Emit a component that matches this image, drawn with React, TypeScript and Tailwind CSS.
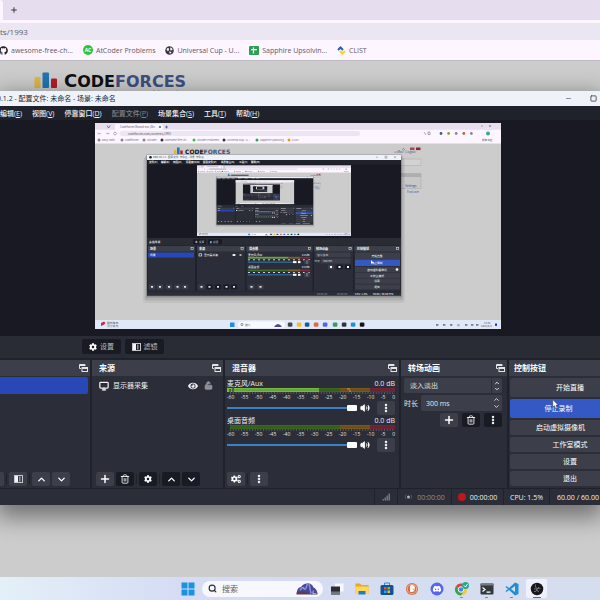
import React from "react";
import { ChevronDown, ChevronUp, EllipsisVertical, LockOpen, Minus, Monitor, Plus, Search, Square, Trash2, Volume2 } from "lucide-react";
import { FaCog, FaCogs, FaDiscord, FaEye, FaGithub } from "react-icons/fa";

/* ---------- captured desktop shown in the preview ---------- */

const previewMenus = ["文件(F)", "编辑(E)", "视图(V)", "停靠窗口(D)", "配置文件(P)", "场景集合(S)", "工具(T)", "帮助(H)"];
const previewMenuX = [54, 66, 78, 91, 108, 126, 144, 156];
const previewBookmarks: [number, string, string][] = [
  [3, "#8a8794", "Daily Math"],
  [26, "#8a8794", "Codeforces"],
  [48, "#8a8794", "AtCoder"],
  [66, "#333333", "awesome-free-ch..."],
  [98, "#2fc43b", "AtCoder Problems"],
  [128, "#333333", "Universal Cup - U..."],
  [161, "#2ea35a", "Sapphire Upsolving..."],
  [193, "#d9a320", "CLIST"],
];
const previewTaskIcons: [number, string][] = [
  [195, "#43464d"], [204, "#f1bd35"], [212, "#1c5c94"], [221, "#dd6b42"], [230, "#5661e8"],
  [240, "#3b9c55"], [249, "#30343b"], [258, "#2492d1"], [267, "#15161a"],
];

function Dock({ x, w, children }: { x: number; w: number; children?: React.ReactNode }) {
  return (
    <g>
      <rect x={x} y={123} width={w} height={45} fill="#2b2e38" />
      <rect x={x} y={123} width={w} height={5.5} fill="#3c3f49" />
      <rect x={x + w - 4} y={124.5} width={2.2} height={2} fill="none" stroke="#d8d9dd" strokeWidth={0.6} />
      {children}
    </g>
  );
}

function Label({ x, y, size, fill, bold, detail, w, children }: { x: number; y: number; size: number; fill: string; bold?: boolean; detail: boolean; w: number; children: string }) {
  if (!detail) {
    return <rect x={x} y={y - size * 0.7} width={w} height={size * 0.6} fill={fill} opacity={0.6} />;
  }
  return (
    <text x={x} y={y} fontSize={size} fill={fill} fontWeight={bold ? 700 : 400}>
      {children}
    </text>
  );
}

function Desktop({ depth }: { depth: number }) {
  const detail = depth === 0;
  return (
    <g>
      <rect width={406} height={206} fill="#cccccc" />
      <rect width={406} height={6.5} fill="#e6deee" />
      <rect x={20} y={1} width={48} height={6} rx={1.5} fill="#fdf5ff" />
      <rect y={6.5} width={406} height={14} fill="#fdf5ff" />
      <rect x={25} y={8} width={240} height={5} rx={2.5} fill="#ebe6f1" />
      <path d="M12 2.5l1.6 2.5 1.6-2.5M64 3l2 2M66 3l-2 2M70 4h3M71.500 2.500v3" stroke="#35577a" strokeWidth={0.7} fill="none" />
      <Label detail={detail} x={25} y={5} size={2.8} w={32} fill="#5d5965">Codeforces Round 963 (Div.</Label>
      <path d="M6 10.500h-3l1-1m-1 1l1 1M11 10.500h3l-1-1m1 1l-1 1" stroke="#8b8792" strokeWidth={0.5} fill="none" />
      <circle cx={20} cy={10.500} r={1.4} stroke="#77737e" strokeWidth={0.5} fill="none" />
      <Label detail={detail} x={33} y={11.6} size={3} w={44} fill="#5d5965">codeforces.com/contests/1993</Label>
      {["#345c9c", "#8c9a4b", "#8a8794", "#c3603a", "#8a8794"].map((c, i) => (
        <circle key={i} cx={346 + i * 7.6} cy={10.5} r={1.4} fill={c} />
      ))}
      <circle cx={393} cy={10.5} r={2} fill="#3ba784" />
      <path d="M329 9l2 3M333 9h2v2.500h-2zM386 3h2M394 2l2 2m0-2l-2 2" stroke="#77737e" strokeWidth={0.6} fill="none" />
      {previewBookmarks.map(([x, c, t]) => (
        <g key={x}>
          <circle cx={x + 1} cy={17} r={1.5} fill={c} />
          <Label detail={detail} x={x + 4} y={18} size={2.6} w={14} fill="#6d6975">{t}</Label>
        </g>
      ))}
      <Label detail={detail} x={387} y={18} size={2.6} w={12} fill="#5d5965">所有书签</Label>

      <rect x={79} y={27} width={2.4} height={4.5} fill="#e2b53c" />
      <rect x={82} y={24.5} width={2.6} height={7} fill="#2377b8" />
      <rect x={85.3} y={27.5} width={2.4} height={4} fill="#b41f27" />
      {detail ? (
        <text x={90} y={31} fontSize={6} fontFamily="DejaVu Sans" fontWeight={700} fill="#111">
          CODE<tspan fill="#44517f">FORCES</tspan>
        </text>
      ) : (
        <rect x={90} y={27} width={46} height={3} fill="#333b52" />
      )}
      <rect x={315} y={24.5} width={4.5} height={2.6} fill="#a8474c" />
      <rect x={321} y={24.5} width={4.5} height={2.6} fill="#8e2333" />
      <path d="M307 27l1.500-2 1.500 2" stroke="#777" strokeWidth={0.6} fill="none" />
      <Label detail={detail} x={299} y={30.3} size={2.8} w={28} fill="#4b5580">1.4BoxT | Logout</Label>
      <rect x={296} y={36} width={30} height={6.500} fill="#d2d2d2" stroke="#a9a9a9" strokeWidth={0.5} />
      <rect x={296} y={50.5} width={30} height={15} fill="#c8c8c8" stroke="#a4a4a4" strokeWidth={0.5} />
      <rect x={296} y={50.5} width={30} height={3.5} fill="#aeaeae" />
      <Label detail={detail} x={310} y={64} size={3} w={11} fill="#31489a">Settings</Label>
      <Label detail={detail} x={312} y={69.5} size={2.8} w={13} fill="#4058a8">Find user</Label>

      {/* recorder window */}
      <rect x={48} y={35} width={262} height={145} rx={3} fill="#000" opacity={0.05} />
      <rect x={49.500} y={33} width={259} height={144.500} rx={2} fill="#000" opacity={0.09} />
      <rect x={51} y={31.5} width={256} height={143} fill="#000" opacity={0.18} />
      <rect x={52} y={31.5} width={254} height={141} fill="#20222b" />
      <rect x={52} y={31.5} width={254} height={5.5} fill="#eff3f9" />
      <circle cx={55.5} cy={34.200} r={1.3} fill="#222" />
      <Label detail={detail} x={58} y={35.4} size={2.6} w={50} fill="#4e535c">OBS 30.1.2 - 配置文件: 未命名 - 场景: 未命名</Label>
      <path d="M281 34.200h2M290 33.200h2v2h-2zM299 33.200l2 2m0-2l-2 2" stroke="#777" strokeWidth={0.5} fill="none" />
      {previewMenus.map((t, i) => (
        <Label key={t} detail={detail} x={previewMenuX[i]} y={40} size={2.5} w={8} bold fill="#ffffff">{t}</Label>
      ))}
      <rect x={52} y={41.5} width={254} height={73.500} fill="#181923" />
      {depth < 4 ? (
        <g transform="translate(102 42.5) scale(0.3793 0.3417)">
          <Desktop depth={depth + 1} />
        </g>
      ) : null}
      <rect x={52} y={115} width={254} height={7.500} fill="#292c35" />
      <Label detail={detail} x={54} y={120} size={2.8} w={11} bold fill="#dddde0">未选择源</Label>
      <rect x={98} y={116.3} width={13} height={5} rx={0.8} fill="#181a24" />
      <rect x={113} y={116.3} width={14} height={5} rx={0.8} fill="#181a24" />
      <Label detail={detail} x={100} y={120} size={2.8} w={9} fill="#d0d1d6">✱ 设置</Label>
      <Label detail={detail} x={115} y={120} size={2.8} w={9} fill="#d0d1d6">▮ 滤镜</Label>

      <Dock x={53} w={47}>
        <Label detail={detail} x={55} y={127} size={3} w={6} bold fill="#fff">场景</Label>
        <rect x={53} y={129.5} width={46} height={5} fill="#2848b8" />
        <Label detail={detail} x={55} y={133} size={2.8} w={5} fill="#fff">场景</Label>
      </Dock>
      <Dock x={102} w={48}>
        <Label detail={detail} x={104} y={127} size={3} w={6} bold fill="#fff">来源</Label>
        <rect x={104} y={130.8} width={2.8} height={2.2} fill="none" stroke="#fff" strokeWidth={0.6} />
        <Label detail={detail} x={109} y={133.200} size={2.8} w={14} fill="#fff">显示器采集</Label>
        <ellipse cx={139} cy={132} rx={1.700} ry={1} fill="#fff" />
        <rect x={144.500} y={131} width={2} height={2} fill="#aaa" />
      </Dock>
      <Dock x={151.5} w={66}>
        <Label detail={detail} x={154} y={127} size={3} w={9} bold fill="#fff">混音器</Label>
        {[0, 12.7].map((o, i) => (
          <g key={o} transform={`translate(0 ${o})`}>
            <Label detail={detail} x={153} y={132.500} size={2.8} w={10} fill="#fff">{i ? "桌面音频" : "麦克风/Aux"}</Label>
            <Label detail={detail} x={207} y={132.500} size={2.6} w={7} fill="#fff">0.0 dB</Label>
            <rect x={153} y={133.8} width={40} height={1.8} fill={i ? "#3f6b2a" : "#65a83b"} />
            <rect x={193} y={133.8} width={12} height={1.8} fill="#80602a" />
            <rect x={205} y={133.8} width={10} height={1.8} fill="#84293c" />
            <path d="M153 136.800h62" stroke="#cdd0d6" strokeWidth={1} strokeDasharray="2 3" />
            <rect x={153} y={138.700} width={46} height={0.9} fill="#3a7fc4" />
            <rect x={198} y={138.100} width={3.500} height={2} fill="#fff" />
            <rect x={203} y={138.100} width={2.500} height={2} fill="#fff" />
            <rect x={209} y={136.800} width={6} height={4.500} rx={0.600} fill="#3c3f49" />
            <path d="M212 137.600v3" stroke="#fff" strokeWidth={0.7} strokeDasharray="0.700 0.400" />
          </g>
        ))}
      </Dock>
      <Dock x={219} w={39}>
        <Label detail={detail} x={221} y={127} size={3} w={13} bold fill="#fff">转场动画</Label>
        <rect x={220.500} y={129.5} width={35} height={4.800} rx={0.6} fill="#3c3f49" />
        <Label detail={detail} x={222} y={133} size={2.8} w={11} fill="#ddd">淡入淡出</Label>
        <rect x={226} y={135.500} width={29.500} height={5} rx={0.6} fill="#3c3f49" />
        <Label detail={detail} x={219.500} y={139.200} size={2.8} w={5} fill="#ddd">时长</Label>
        <Label detail={detail} x={228} y={139.200} size={2.8} w={9} fill="#ddd">300 ms</Label>
        {[233, 241.500, 250].map((x, i) => (
          <g key={x}>
            <rect x={x} y={141.700} width={6} height={4.600} rx={0.6} fill={i ? "#181a24" : "#3c3f49"} />
            <rect x={x + 2} y={143} width={2} height={2} fill="#fff" />
          </g>
        ))}
      </Dock>
      <Dock x={259.5} w={46}>
        <Label detail={detail} x={262} y={127} size={3} w={13} bold fill="#fff">控制按钮</Label>
        {["开始直播", "停止录制", "启动虚拟摄像机", "工作室模式", "设置", "退出"].map((t, i) => {
          const y = [129.5, 136.5, 144, 149.8, 155.600, 161.4][i];
          const h = i < 2 ? 6.5 : 5.2;
          return (
            <g key={t}>
              <rect x={260} y={y} width={45} height={h} rx={0.6} fill={i === 1 ? "#3459c4" : "#3c3f49"} />
              <Label detail={detail} x={282 - t.length * 1.4} y={y + h / 2 + 1.100} size={2.8} w={t.length * 2.8} fill="#fff">{t}</Label>
            </g>
          );
        })}
        <circle cx={302} cy={146.500} r={1.300} fill="#fff" />
        <path d="M276 137l0 4 1-1 1.500 0z" fill="#fff" />
      </Dock>
      {[54, 62, 71, 79.500, 87, 103.500, 111.500, 120, 128.500, 136, 153.500, 162.500].map((x, i) => (
        <g key={x}>
          <rect x={x} y={161.500} width={6} height={4.700} rx={0.6} fill={i > 5 && i < 10 ? "#181a24" : "#3c3f49"} />
          <rect x={x + 2} y={163} width={2} height={1.700} fill="#e4e5e8" />
        </g>
      ))}
      <rect x={52} y={168.500} width={254} height={4} fill="#2b2e38" />
      <Label detail={detail} x={222} y={171.600} size={2.6} w={12} fill="#90939b">00:00:00</Label>
      <Label detail={detail} x={242} y={171.600} size={2.6} w={12} fill="#90939b">00:00:00</Label>
      <Label detail={detail} x={260} y={171.600} size={2.6} w={13} fill="#fff">CPU: 1.5%</Label>
      <Label detail={detail} x={278} y={171.600} size={2.6} w={20} fill="#fff">60.00 / 60.00 FPS</Label>

      {/* taskbar */}
      <rect y={197} width={406} height={9} fill="#e1e8f7" />
      <path d="M6 200l3-1.500 1.500 1.500-2 2-2.500 1z" fill="#d0293d" />
      <Label detail={detail} x={12} y={200.700} size={2.8} w={17} fill="#555">明日降雨</Label>
      <Label detail={detail} x={12} y={204} size={2.8} w={17} fill="#777">预计有雨</Label>
      <rect x={135} y={199.500} width={4.500} height={4.500} fill="#1f8fdc" />
      <rect x={143} y={198.400} width={47} height={6.600} rx={3.300} fill="#f8faff" />
      <circle cx={147} cy={201.500} r={1.100} stroke="#333" strokeWidth={0.5} fill="none" />
      <Label detail={detail} x={150} y={202.800} size={2.8} w={6} fill="#555">搜索</Label>
      <path d="M179 204q4-6 8 0z" fill="#4c4a8c" />
      {previewTaskIcons.map(([x, c]) => (
        <rect key={x} x={x - 2.200} y={199.500} width={4.600} height={4.200} rx={1.200} fill={c} />
      ))}
      {[341, 348, 355, 370, 376, 381].map((x) => (
        <rect key={x} x={x} y={201} width={2.400} height={1.800} fill="#7b808c" />
      ))}
      <Label detail={detail} x={362} y={202.800} size={2.8} w={4} fill="#555">英</Label>
      <Label detail={detail} x={389} y={200.700} size={2.6} w={8} fill="#555">22:35</Label>
      <Label detail={detail} x={386} y={203.900} size={2.6} w={11} fill="#555">2024/8/4</Label>
      <rect x={400} y={200.500} width={2} height={2.400} fill="#2b39c4" />
    </g>
  );
}

/* ---------- small shared parts ---------- */

function PopOut() {
  return (
    <svg viewBox="0 0 18 16" className="h-2 w-[9px]" fill="none" stroke="#e3e4e8" strokeWidth="2">
      <path d="M4 9H1V1h11v3M1 3h11" />
      <rect x="6" y="7" width="11" height="8" fill="#3c3f49" />
      <path d="M6 9h11" />
    </svg>
  );
}

function Filters() {
  return (
    <svg viewBox="0 0 18 16" className="h-2 w-[9px]">
      <rect x="1" y="1" width="16" height="14" fill="none" stroke="#c3c5cb" strokeWidth="2" />
      <rect x="2" y="2" width="6" height="12" fill="#f4f4f6" />
      <rect x="10" y="3" width="3" height="10" fill="#8f929a" />
    </svg>
  );
}

function DockTitle({ children }: { children?: string }) {
  return (
    <h2 className="flex h-4 items-center justify-between bg-[#3c3f49] pr-[2px] pl-[7px] text-[8px] leading-none font-bold text-white">
      <span>{children}</span>
      <PopOut />
    </h2>
  );
}

function Tool({ label, dark, children }: { label: string; dark?: boolean; children: React.ReactNode }) {
  return (
    <button
      aria-label={label}
      className={`flex h-[14px] w-[18px] shrink-0 items-center justify-center rounded-[2px] text-white ${dark ? "bg-[#181a24]" : "bg-[#3c3f49]"}`}
    >
      {children}
    </button>
  );
}

const Sep = () => <span className="h-[10px] w-px shrink-0 bg-[#20222b]" />;

function Channel({ name, live }: { name: string; live?: boolean }) {
  const marks = ["-60", "-55", "-50", "-45", "-40", "-35", "-30", "-25", "-20", "-15", "-10", "-5", "0"];
  return (
    <div className="flex h-[37px] flex-col">
      <div className="flex h-[10px] items-center justify-between text-[7px] leading-none text-[#ececef]">
        <span>{name}</span>
        <span>0.0 dB</span>
      </div>
      <svg viewBox="0 0 168 6" preserveAspectRatio="none" className="h-[6px] w-full shrink-0">
        <rect x="3" y="0" width="110" height="4" fill="#3c671f" />
        <rect x="113" y="0" width="30" height="4" fill="#7a571c" />
        <rect x="143" y="0" width="25" height="4" fill="#742338" />
        {live ? <rect x="0" y="0" width="92" height="4" fill="#74ba40" /> : null}
        {live ? <path d="M3 1v3M6 0v4" stroke="#1c2a18" strokeWidth="1" /> : null}
        {live ? <path d="M120 1h3M122 3h2" stroke="#d8a631" strokeWidth="1" /> : null}
        <path d="M3 2h165" stroke="#22301e" strokeWidth="0.5" opacity="0.6" />
        <path d="M3 5h165" stroke="#7f838c" strokeWidth="1" strokeDasharray="1 1.750" />
      </svg>
      <div className="flex h-[6px] items-center justify-between text-[5px] leading-none text-[#e0e1e5]">
        {marks.map((m) => (
          <span key={m}>{m}</span>
        ))}
      </div>
      <div className="flex h-[15px] items-center">
        <input
          type="range"
          aria-label={name}
          defaultValue={100}
          className="h-2 min-w-0 flex-1 appearance-none bg-transparent [&::-webkit-slider-runnable-track]:h-[2px] [&::-webkit-slider-runnable-track]:bg-[#3a82c8] [&::-webkit-slider-thumb]:-mt-[2px] [&::-webkit-slider-thumb]:h-[6px] [&::-webkit-slider-thumb]:w-[10px] [&::-webkit-slider-thumb]:appearance-none [&::-webkit-slider-thumb]:rounded-[1px] [&::-webkit-slider-thumb]:bg-white"
        />
        <Volume2 className="mr-[7px] ml-[3px] size-[10px] shrink-0 fill-white text-white" strokeWidth={2} />
        <Tool label="更多">
          <EllipsisVertical className="size-[10px]" strokeWidth={4} />
        </Tool>
      </div>
    </div>
  );
}

const menus: [string, string][] = [["编辑", "E"], ["视图", "V"], ["停靠窗口", "D"], ["配置文件", "P"], ["场景集合", "S"], ["工具", "T"], ["帮助", "H"]];

function Control({ children, tone }: { children: string; tone?: "tall" | "active" | "narrow" }) {
  const style =
    tone === "active"
      ? "h-[19px] w-[97px] bg-[#3459c4]"
      : tone === "tall"
        ? "h-[19px] w-full bg-[#3c3f49]"
        : tone === "narrow"
          ? "h-[15px] w-[101px] bg-[#3c3f49]"
          : "h-[15px] w-full bg-[#3c3f49]";
  return <button className={`flex items-center justify-center rounded-[2px] text-[7px] leading-none text-white ${style}`}>{children}</button>;
}

function TaskButton({ label, children, active, running }: { label: string; children: React.ReactNode; active?: boolean; running?: boolean }) {
  return (
    <button aria-label={label} className={`flex h-[19px] w-[21px] flex-col items-center justify-end rounded-[2px] ${active ? "bg-[#eef1fb]" : ""}`}>
      <svg viewBox="0 0 28 28" className="size-[14px]">
        {children}
      </svg>
      <span className={`mt-px h-px rounded-full ${active ? "w-2 bg-[#5a56c8]" : running ? "w-[3px] bg-[#7f8491]" : "w-[3px]"}`} />
    </button>
  );
}

export default function App() {
  return (
    <div className="flex min-h-screen flex-col overflow-hidden bg-[#cccccc] font-['Open_Sans','Noto_Sans_CJK_SC',sans-serif] text-[7px]">
      {/* browser chrome */}
      <header className="bg-[#fdf5ff] text-[#5f5a68]">
        <div className="flex h-5 items-center bg-[#e6deee]">
          <span className="h-full w-[3px] rounded-tr-[3px] bg-[#fdf5ff]" />
          <button aria-label="新标签页" className="ml-[7px]">
            <Plus className="size-2 text-[#3d3946]" strokeWidth={3} />
          </button>
        </div>
        <div className="pt-[3px]">
          <input aria-label="地址" defaultValue="ts/1993" className="block h-[17px] w-full bg-[#ebe6f1] text-[8px] leading-none outline-none" />
        </div>
        <nav className="flex h-5 items-center gap-[10px] text-[7px] leading-none whitespace-nowrap">
          <a href="#free" className="-ml-px flex items-center gap-[3px]">
            <FaGithub className="size-[9px] text-[#24222a]" />
            awesome-free-ch...
          </a>
          <a href="#atcoder" className="flex items-center gap-[3px]">
            <span className="flex size-[10px] items-center justify-center rounded-full bg-[#2cc63b] text-[5px] font-bold text-white">AC</span>
            AtCoder Problems
          </a>
          <a href="#ucup" className="flex items-center gap-[3px]">
            <svg viewBox="0 0 18 18" className="size-[9px]">
              <circle cx="9" cy="9" r="8.500" fill="#3a3840" />
              <path d="M3 6q4-4 5 0t-3 4zM10 3q5 0 5 5l-4 1zM8 11l5 1-3 4z" fill="#fdf5ff" />
            </svg>
            Universal Cup - U...
          </a>
          <a href="#sapphire" className="flex items-center gap-[3px]">
            <svg viewBox="0 0 20 18" className="h-[9px] w-[10px]">
              <rect width="20" height="18" rx="2" fill="#2aa050" />
              <path d="M4 7h12M9 3v12" stroke="#fff" strokeWidth="2.500" />
            </svg>
            Sapphire Upsolvin...
          </a>
          <a href="#clist" className="flex items-center gap-[3px]">
            <svg viewBox="0 0 18 18" className="size-[9px]" fill="none" strokeWidth="4">
              <path d="M2 8l5-5 5 5" stroke="#2760b4" />
              <path d="M6 10l5 5 5-5" stroke="#f2d52a" />
            </svg>
            CLIST
          </a>
        </nav>
      </header>

      {/* site header, partly covered by the recorder */}
      <div className="flex h-[31px] items-start overflow-hidden border-t border-[#bdb9bf] pt-[11px] pl-[34px]">
        <svg viewBox="0 0 46 34" className="h-[17px] w-[23px]">
          <rect x="1" y="10" width="12" height="22" rx="2" fill="#dfb64b" />
          <rect x="17" y="1" width="13" height="31" rx="2" fill="#2274b4" />
          <rect x="34" y="13" width="12" height="19" rx="2" fill="#b01e28" />
        </svg>
        <div className="ml-[7px] flex flex-col items-end font-['DejaVu_Sans',sans-serif] font-bold">
          <h1 className="text-[16px] leading-[18px] text-[#101014]">
            <span className="text-[18px] leading-none">C</span>ODE<span className="text-[#414f82]">FORCES</span>
          </h1>
          <p className="text-[7px] leading-none text-[#2b2e3c]">Sponsored by TON</p>
        </div>
      </div>

      {/* recorder window */}
      <main className="relative z-10 bg-[#20222b] shadow-[0_8px_22px_4px_rgba(0,0,0,0.45)]">
        <div className="flex h-[15px] items-center justify-between bg-[#eff3f9] text-[7px] leading-none whitespace-nowrap text-[#22242b]">
          <span className="-ml-[3px]">0.1.2 - 配置文件: 未命名 - 场景: 未命名</span>
          <span className="flex items-center gap-[18px] pr-[3px] text-[#444751]">
            <button aria-label="最小化"><Minus className="size-[7px]" /></button>
            <button aria-label="最大化">
              <Square className="size-[7px]" strokeWidth={3} />
            </button>
          </span>
        </div>
        <nav className="flex h-[14px] items-center gap-[10px] text-[7px] leading-none font-medium whitespace-nowrap text-[#f1f1f3]">
          {menus.map(([name, key]) => (
            <button key={key} className={key === "P" ? "text-[#7d8089]" : ""}>
              {name}(<u>{key}</u>)
            </button>
          ))}
        </nav>

        <div className="bg-[#181923] pt-[3px] pr-[99px] pb-[7px] pl-[95px]">
          <svg viewBox="0 0 406 206" className="block h-auto w-full font-['Noto_Sans_CJK_SC',sans-serif]" role="img" aria-label="预览">
            <Desktop depth={0} />
          </svg>
        </div>

        <div className="flex h-6 items-start gap-1 border-b-2 border-[#20222b] bg-[#292c35] pt-[3px] pl-[82px] text-[7px] leading-none text-[#b9bbc2]">
          <button className="flex h-[15px] w-[39px] items-center justify-center gap-[3px] rounded-[2px] bg-[#181a24]">
            <FaCog className="size-2 text-white" />
            设置
          </button>
          <button className="flex h-[15px] w-[39px] items-center justify-center gap-[3px] rounded-[2px] bg-[#181a24]">
            <Filters />
            滤镜
          </button>
        </div>

        <div className="grid grid-cols-[90fr_131fr_174fr_106fr_91fr] gap-[2px]">
          <section className="flex min-w-0 flex-col overflow-hidden bg-[#2b2e38]">
            <DockTitle />
            <div className="mt-px mr-[2px] h-[17px] rounded-r-[2px] bg-[#2848b8]" />
            <div className="mt-auto flex items-center justify-end gap-[2px] pr-5 pb-[2px]">
              <Tool label="删除场景"><Trash2 className="size-2" /></Tool>
              <Sep />
              <Tool label="场景滤镜"><Filters /></Tool>
              <Sep />
              <Tool label="上移"><ChevronUp className="size-[11px]" strokeWidth={3} /></Tool>
              <Tool label="下移"><ChevronDown className="size-[11px]" strokeWidth={3} /></Tool>
            </div>
          </section>

          <section className="flex min-w-0 flex-col overflow-hidden bg-[#2b2e38]">
            <DockTitle>来源</DockTitle>
            <div className="mt-px flex h-[17px] items-center pr-[10px] pl-[7px] text-[7px] leading-none text-[#f0f0f2]">
              <Monitor className="mr-1 size-[10px]" strokeWidth={3} />
              显示器采集
              <FaEye className="ml-auto size-[10px]" />
              <LockOpen className="ml-[6px] size-[9px] fill-[#8d8f95] text-[#9a9ca2]" strokeWidth={2} />
            </div>
            <div className="mt-auto flex items-center gap-[2px] pb-[2px] pl-1">
              <Tool label="添加来源"><Plus className="size-3" strokeWidth={3} /></Tool>
              <Tool label="删除来源" dark><Trash2 className="size-[10px]" strokeWidth={2} /></Tool>
              <Sep />
              <Tool label="来源设置" dark><FaCog className="size-2" /></Tool>
              <Sep />
              <Tool label="上移" dark><ChevronUp className="size-[11px]" strokeWidth={3} /></Tool>
              <Tool label="下移" dark><ChevronDown className="size-[11px]" strokeWidth={3} /></Tool>
            </div>
          </section>

          <section className="flex min-w-0 flex-col overflow-hidden bg-[#2b2e38]">
            <DockTitle>混音器</DockTitle>
            <div className="flex flex-col pt-[2px] pr-[4px] pl-[2px]">
              <Channel name="麦克风/Aux" live />
              <Channel name="桌面音频" />
            </div>
            <div className="mt-auto flex items-center gap-[2px] pb-[2px] pl-[2px]">
              <Tool label="高级音频属性"><FaCogs className="size-[10px]" /></Tool>
              <Sep />
              <Tool label="混音器菜单"><EllipsisVertical className="size-[10px]" strokeWidth={4} /></Tool>
            </div>
          </section>

          <section className="min-w-0 overflow-hidden bg-[#2b2e38] text-[#e4e5e8]">
            <DockTitle>转场动画</DockTitle>
            <div className="flex flex-col gap-[2px] pt-[2px] pr-[5px] pl-[3px]">
              <div className="relative flex">
                <select aria-label="转场动画" className="h-[15px] w-full appearance-none rounded-[2px] bg-[#3c3f49] pl-[6px] text-[7px] leading-none">
                  <option>淡入淡出</option>
                </select>
                <span className="pointer-events-none absolute inset-y-0 right-0 flex w-[11px] flex-col items-center justify-center border-l border-[#2b2e38]">
                  <ChevronUp className="size-[6px]" strokeWidth={4} />
                  <ChevronDown className="size-[6px]" strokeWidth={4} />
                </span>
              </div>
              <label className="relative flex items-center gap-[3px] leading-none">
                时长
                <input defaultValue="300 ms" className="h-4 w-0 flex-1 rounded-[2px] bg-[#3c3f49] pl-[5px] text-[7px] leading-none" />
                <span className="pointer-events-none absolute right-[2px] flex flex-col">
                  <ChevronUp className="size-[7px]" strokeWidth={3} />
                  <ChevronDown className="size-[7px]" strokeWidth={3} />
                </span>
              </label>
              <div className="flex justify-end gap-1">
                <Tool label="添加转场"><Plus className="size-3" strokeWidth={3} /></Tool>
                <Tool label="删除转场" dark><Trash2 className="size-[10px]" strokeWidth={2} /></Tool>
                <Tool label="转场菜单" dark><EllipsisVertical className="size-[10px]" strokeWidth={4} /></Tool>
              </div>
            </div>
          </section>

          <section className="relative min-w-0 overflow-hidden bg-[#2b2e38]">
            <h2 className="flex h-4 items-center bg-[#3c3f49] pl-[5px] text-[8px] leading-none font-bold text-white">控制按钮</h2>
            <div className="flex w-[121px] flex-col gap-[2px] py-[2px] pl-px">
              <Control tone="tall">开始直播</Control>
              <Control tone="active">停止录制</Control>
              <Control tone="narrow">启动虚拟摄像机</Control>
              <Control>工作室模式</Control>
              <Control>设置</Control>
              <Control>退出</Control>
            </div>
            <svg viewBox="0 0 12 18" className="absolute top-[39px] left-[43px] h-[10px] w-[7px]">
              <path d="M1 1v14l3-3 2 5 3-1-2-5h4z" fill="#fff" stroke="#333" strokeWidth="1" />
            </svg>
          </section>
        </div>

        <footer className="mt-px flex h-4 items-stretch bg-[#2b2e38] text-[7px] leading-none whitespace-nowrap text-[#f0f0f2]">
          <span className="flex-1" />
          <span className="flex w-[23px] items-center justify-center border-l border-[#20222b]">
            <svg viewBox="0 0 18 16" className="h-2 w-[9px]" fill="#73767f">
              <path d="M1 12h3v3H1zM5 9h3v6H5zM9 5h3v10H9zM13 1h3v14h-3z" />
            </svg>
          </span>
          <span className="flex w-[54px] items-center justify-center gap-1 border-l border-[#20222b] text-[#8b8e97]">
            <svg viewBox="0 0 18 12" className="h-[6px] w-[9px]" fill="none" stroke="#5b5e68" strokeWidth="1.500">
              <circle cx="9" cy="6" r="3" fill="#b0b2b9" stroke="none" />
              <path d="M4 1q-3 5 0 10M14 1q3 5 0 10" />
            </svg>
            00:00:00
          </span>
          <span className="flex w-[52px] items-center justify-center gap-1 border-l border-[#20222b]">
            <span className="size-2 rounded-full bg-[#c01818]" />
            00:00:00
          </span>
          <span className="flex w-[46px] items-center justify-center border-l border-[#20222b]">CPU: 1.5%</span>
          <span className="flex w-[51px] items-center overflow-hidden border-l border-[#20222b] pl-[7px]">60.00 / 60.00 FPS</span>
        </footer>
      </main>

      <div className="flex-1" />

      {/* taskbar */}
      <footer className="relative z-20 flex h-[23px] items-center bg-linear-to-r from-[#e4f0f8] via-[#d5dcf4] via-30% to-[#d5deee] pl-[177px]">
        <TaskButton label="开始">
          <path d="M1 1h12v12H1zM15 1h12v12H15zM1 15h12v12H1zM15 15h12v12H15z" fill="#1b94e0" />
        </TaskButton>
        <label className="ml-1 flex h-4 w-[121px] items-center rounded-full bg-[#f6f8fe] pr-[5px] pl-[6px]">
          <Search className="size-[9px] shrink-0 text-[#2a2c35]" strokeWidth={3} />
          <input aria-label="搜索" placeholder="搜索" className="ml-[5px] min-w-0 flex-1 bg-transparent text-[8px] leading-none outline-none placeholder:text-[#5b5e68]" />
          <svg viewBox="0 0 44 24" className="h-3 w-[22px]">
            <path d="M1 20q2-12 9-12 5-8 14-7 8 0 11 8 6 2 8 11z" fill="#4a4796" />
            <path d="M8 15q5-9 8-4t6-7 6 7 7 4" stroke="#8393dc" strokeWidth="3" fill="none" />
            <path d="M1 20q10-5 21-1t21 1v3H1z" fill="#5c3c58" />
          </svg>
        </label>
        <div className="ml-[3px] flex gap-[4px]">
          <TaskButton label="任务视图">
            <path d="M10 3h17v16H10z" fill="#f7f8fa" />
            <path d="M2 9h18v16H2z" fill="#2b2d33" />
            <path d="M2 19h18v6H2z" fill="#72757b" />
          </TaskButton>
          <TaskButton label="文件资源管理器">
            <path d="M1 3h9l3 3h14v18H1z" fill="#e9a920" />
            <path d="M1 9h26v15H1z" fill="#ffd75e" />
            <path d="M7 18h14v7H7z" fill="#1b7fc6" />
          </TaskButton>
          <TaskButton label="应用商店">
            <path d="M9 7V2h10v5" fill="none" stroke="#2292d0" strokeWidth="2" />
            <rect x="1" y="6" width="26" height="20" rx="3" fill="#16528e" />
            <path d="M8 10h5v5H8z" fill="#ee5136" />
            <path d="M15 10h5v5h-5z" fill="#82bb30" />
            <path d="M8 17h5v5H8z" fill="#2ba8e8" />
            <path d="M15 17h5v5h-5z" fill="#f9bd25" />
          </TaskButton>
          <TaskButton label="DuckDuckGo">
            <circle cx="14" cy="14" r="12" fill="#dc6844" />
            <circle cx="14" cy="14" r="9.500" fill="none" stroke="#f5c4b2" strokeWidth="1.500" />
            <path d="M10 20V10q0-5 5-4 5 1 5 6l-2 8z" fill="#fff" />
            <path d="M15 13l6 1-5 3z" fill="#f3b62c" />
            <path d="M15 18l4 1v3z" fill="#5fae45" />
          </TaskButton>
          <TaskButton label="Discord">
            <circle cx="14" cy="14" r="13" fill="#5865f2" />
            <FaDiscord x={5} y={5} size={18} color="#ffffff" />
          </TaskButton>
          <TaskButton label="Chrome" running>
            <circle cx="12" cy="15" r="12" fill="#f7c928" />
            <path d="M12 15L1.600 9A12 12 0 0 1 22.400 9z" fill="#e04335" />
            <path d="M12 15L1.600 9A12 12 0 0 0 12 27l5-9z" fill="#35a353" />
            <circle cx="12" cy="15" r="5.500" fill="#4285f4" stroke="#fff" strokeWidth="2" />
            <circle cx="21" cy="7" r="7" fill="#2aa88d" />
            <path d="M18 7l3 3 4-6" stroke="#fff" strokeWidth="2" fill="none" />
          </TaskButton>
          <TaskButton label="终端" running>
            <rect x="1" y="3" width="26" height="22" rx="2" fill="#34383e" />
            <path d="M1 3h26v4H1z" fill="#777b82" />
            <path d="M5 11l5 4-5 4M13 20h8" stroke="#fff" strokeWidth="2.500" fill="none" />
          </TaskButton>
          <TaskButton label="Visual Studio Code" running>
            <path d="M20 1l7 3v20l-7 3L8 16l-5 4-2-2 5-4-5-4 2-2 5 4zM20 8l-8 6 8 6z" fill="#1f8fd6" fillRule="evenodd" />
          </TaskButton>
          <TaskButton label="OBS Studio" active>
            <circle cx="14" cy="14" r="12.500" fill="#17181c" />
            <path d="M11 5q-2 6 3 8 4 1 3-3M21 13q-5-3-7 2-1 4 4 4M8 19q5 1 6-4-2-3-6-1" stroke="#85888f" strokeWidth="1.500" fill="none" />
          </TaskButton>
        </div>
      </footer>
    </div>
  );
}
